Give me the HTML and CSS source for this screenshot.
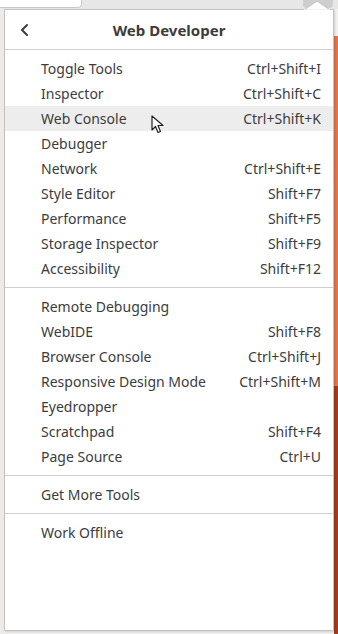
FILE: index.html
```html
<!DOCTYPE html>
<html>
<head>
    <title>Web Developer</title>
    <link rel="stylesheet" href="styles.css">
</head>
<body>
    <div class="toolbar">
        <div class="urlbar"></div>
        <div class="menu-button"></div>
    </div>
    <div class="page-left"></div>
    <div class="page-right"></div>

    <div class="panel">
        <svg class="notch" width="26" height="10" viewBox="0 0 26 10">
            <path d="M0 10 L13 1 L26 10 Z" fill="#fff" stroke="#c3c3c3" stroke-width="1"/>
            <rect x="0" y="9.5" width="26" height="2" fill="#fff"/>
        </svg>
        <div class="panel-header">
            <button class="back" aria-label="Back">
                <svg width="16" height="16" viewBox="0 0 16 16">
                    <path d="M10 3 L5 8 L10 13" fill="none" stroke="#3c3c3c" stroke-width="2" stroke-linecap="round" stroke-linejoin="round"/>
                </svg>
            </button>
            <h1 class="panel-title">Web Developer</h1>
        </div>

        <div class="menu">
            <div class="item"><span>Toggle Tools</span><span class="key">Ctrl+Shift+I</span></div>
            <div class="item"><span>Inspector</span><span class="key">Ctrl+Shift+C</span></div>
            <div class="item hover"><span>Web Console</span><span class="key">Ctrl+Shift+K</span></div>
            <div class="item"><span>Debugger</span><span class="key"></span></div>
            <div class="item"><span>Network</span><span class="key">Ctrl+Shift+E</span></div>
            <div class="item"><span>Style Editor</span><span class="key">Shift+F7</span></div>
            <div class="item"><span>Performance</span><span class="key">Shift+F5</span></div>
            <div class="item"><span>Storage Inspector</span><span class="key">Shift+F9</span></div>
            <div class="item"><span>Accessibility</span><span class="key">Shift+F12</span></div>
            <div class="separator"></div>
            <div class="item"><span>Remote Debugging</span><span class="key"></span></div>
            <div class="item"><span>WebIDE</span><span class="key">Shift+F8</span></div>
            <div class="item"><span>Browser Console</span><span class="key">Ctrl+Shift+J</span></div>
            <div class="item"><span>Responsive Design Mode</span><span class="key">Ctrl+Shift+M</span></div>
            <div class="item"><span>Eyedropper</span><span class="key"></span></div>
            <div class="item"><span>Scratchpad</span><span class="key">Shift+F4</span></div>
            <div class="item"><span>Page Source</span><span class="key">Ctrl+U</span></div>
            <div class="separator"></div>
            <div class="item"><span>Get More Tools</span><span class="key"></span></div>
            <div class="separator"></div>
            <div class="item"><span>Work Offline</span><span class="key"></span></div>
        </div>

        <!-- mouse pointer over the hovered row -->
        <svg class="cursor" width="14" height="20" viewBox="0 0 14 20">
            <path d="M1 1 L1 15 L4.5 11.5 L7 17.5 L9.5 16.5 L7 10.5 L12 10.5 Z" fill="#fff" stroke="#222" stroke-width="1.2" stroke-linejoin="round"/>
        </svg>
    </div>
</body>
</html>
```

FILE: styles.css
```css
body {
    margin: 0;
    width: 338px;
    height: 634px;
    overflow: hidden;
    position: relative;
    background: #f2f1f0;
    font-family: "Noto Sans", "Open Sans", sans-serif;
    color: #3c3c3c;
}
.toolbar {
    height: 9px;
    position: relative;
    background: #e8e7e5;
}
.urlbar {
    position: absolute;
    left: -4px;
    top: -4px;
    width: 84px;
    height: 10px;
    background: #fff;
    border: 1px solid #c9c8c6;
    border-radius: 4px;
}
.menu-button {
    position: absolute;
    left: 303px;
    top: -4px;
    width: 30px;
    height: 12px;
    background: #cfcecc;
    border-radius: 4px;
}
.page-left {
    position: absolute;
    left: 0;
    top: 9px;
    width: 4px;
    bottom: 0;
    background: #ecebea;
}
.page-right {
    position: absolute;
    right: 0;
    top: 36px;
    width: 4px;
    height: 350px;
    background: #e2754b;
    box-shadow: 0 350px 0 #a23b1f;
}
.panel {
    position: absolute;
    left: 4px;
    top: 9px;
    width: 328px;
    height: 620px;
    background: #fff;
    border: 1px solid #c3c3c3;
    box-shadow: 1px 1px 2px rgba(0, 0, 0, 0.15);
}
.notch {
    position: absolute;
    right: 3px;
    top: -10px;
}
.panel-header {
    height: 39px;
    border-bottom: 1px solid #cfcfcf;
    display: flex;
    align-items: center;
    justify-content: center;
    position: relative;
}
.back {
    position: absolute;
    left: 12px;
    top: 12px;
    padding: 0;
    border: none;
    background: none;
    width: 16px;
    height: 16px;
}
.panel-title {
    margin: 0;
    font-size: 15px;
    font-weight: bold;
    color: #3c3c3c;
}
.menu {
    padding-top: 6px;
}
.item {
    height: 25px;
    display: flex;
    align-items: center;
    justify-content: space-between;
    padding: 0 12px 0 36px;
    font-size: 14px;
}
.item.hover {
    background: #ededed;
}
.separator {
    height: 1px;
    background: #cfcfcf;
    margin: 6px 0;
}
.cursor {
    position: absolute;
    left: 146px;
    top: 105px;
}
```
